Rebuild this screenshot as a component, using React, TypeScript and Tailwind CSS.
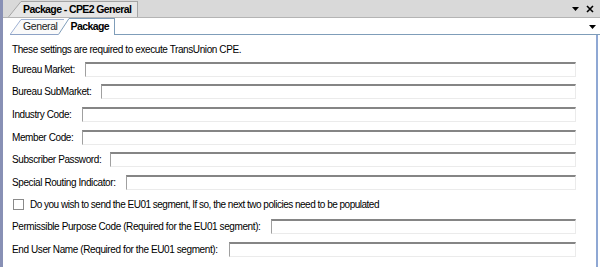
import React from "react";

const font = { fontFamily: "'Liberation Sans', Arial, sans-serif" };

function Field({ label, inputLeft }: { label: string; inputLeft: number }) {
  return (
    <div className="flex items-center h-[22.6px]">
      <span className="w-0 whitespace-nowrap">{label}</span>
      <div
        className="h-[15px] border-t-2 border-l border-t-[#858585] border-l-[#a0a0a0] border-r border-b border-r-[#ebebeb] border-b-[#ebebeb] bg-white"
        style={{ marginLeft: inputLeft - 12, width: 576 - inputLeft }}
      />
    </div>
  );
}

function Tri({ color = "#000" }: { color?: string }) {
  return (
    <svg width="7" height="4" viewBox="0 0 7 4">
      <path d="M0 0 H7 L3.5 4 Z" fill={color} />
    </svg>
  );
}

export default function App() {
  return (
    <div className="w-[600px] h-[267px] bg-white flex text-[10px] tracking-[-0.4px] text-black" style={font}>
      <div className="w-[3px] h-full bg-[#8890b5]" />
      <div className="flex-1 flex flex-col">
        {/* header row */}
        <div className="h-[18px] bg-[#d9d9d9] border-b border-[#b4b4b4] flex items-end">
          <div className="flex items-end ml-[5px]">
            <svg width="14" height="16" viewBox="0 0 14 16" className="block">
              <path d="M0 16 L13 0.5 L14 0.5 L14 16 Z" fill="#e6e6e6" />
              <path d="M0.5 16 L13 0.5 L14 0.5" fill="none" stroke="#a5a5a5" />
            </svg>
            <div className="h-[16px] bg-[#e6e6e6] border-t border-r border-[#a5a5a5] pr-[6px] pl-[1px] flex items-center font-bold text-[10.5px] tracking-[-0.6px]">
              Package - CPE2 General
            </div>
          </div>
          <div className="flex-1" />
          <div className="flex items-center gap-[7px] pr-[6px] h-[17px]">
            <Tri />
            <svg width="8" height="8" viewBox="0 0 8 8">
              <path d="M1 1 L7 7 M7 1 L1 7" stroke="#000" strokeWidth="1.6" />
            </svg>
          </div>
        </div>
        {/* tabs row */}
        <div className="h-[17px] flex items-end relative">
          <div className="flex items-end ml-[7px] border-b border-[#8ea3c6]">
            <svg width="12" height="15" viewBox="0 0 12 15" className="block">
              <path d="M0 15 L11 0.5 L12 0.5 L12 15 Z" fill="#fafafa" />
              <path d="M0.5 15 L11 0.5 L12 0.5" fill="none" stroke="#9fb2d4" />
            </svg>
            <div className="h-[15px] bg-[#fafafa] border-t border-[#9fb2d4] pl-[1px] pr-[6px] flex items-center text-[#222] text-[10.5px] tracking-[-0.4px]">
              General
            </div>
          </div>
          <div className="flex items-end -ml-[6px] relative">
            <svg width="12" height="17" viewBox="0 0 12 17" className="block">
              <path d="M0 17 L11 0.5 L12 0.5 L12 17 Z" fill="#fff" />
              <path d="M0.5 16.5 L11 0.5 L12 0.5" fill="none" stroke="#7f9db9" />
            </svg>
            <div className="h-[17px] bg-white border-t border-r border-[#7f9db9] pl-[1px] pr-[5px] flex items-center font-bold text-[10.5px] tracking-[-0.6px]">
              Package
            </div>
          </div>
          <div className="flex-1 h-px bg-[#7f9db9] self-end" />
          <div className="absolute right-[4px] top-[7px]">
            <Tri />
          </div>
        </div>
        {/* content */}
        <div className="flex-1 flex">
          <div className="flex-1 pl-[9px] pt-[6px]">
            <div className="h-[17px] flex items-center">These settings are required to execute TransUnion CPE.</div>
            <Field label="Bureau Market:" inputLeft={85} />
            <Field label="Bureau SubMarket:" inputLeft={101} />
            <Field label="Industry Code:" inputLeft={82} />
            <Field label="Member Code:" inputLeft={82} />
            <Field label="Subscriber Password:" inputLeft={110} />
            <Field label="Special Routing Indicator:" inputLeft={126} />
            <div className="h-[22px] flex items-center">
              <div className="w-[11px] h-[11px] border border-[#8a8a8a] bg-white mr-[6px] ml-px" />
              <span className="tracking-[-0.5px]">Do you wish to send the EU01 segment, If so, the next two policies need to be populated</span>
            </div>
            <Field label="Permissible Purpose Code (Required for the EU01 segment):" inputLeft={271} />
            <Field label="End User Name (Required for the EU01 segment):" inputLeft={229} />
          </div>
          <div className="w-[2px] bg-[#8fa8d4]" />
          <div className="w-[2px] bg-white" />
        </div>
      </div>
    </div>
  );
}
